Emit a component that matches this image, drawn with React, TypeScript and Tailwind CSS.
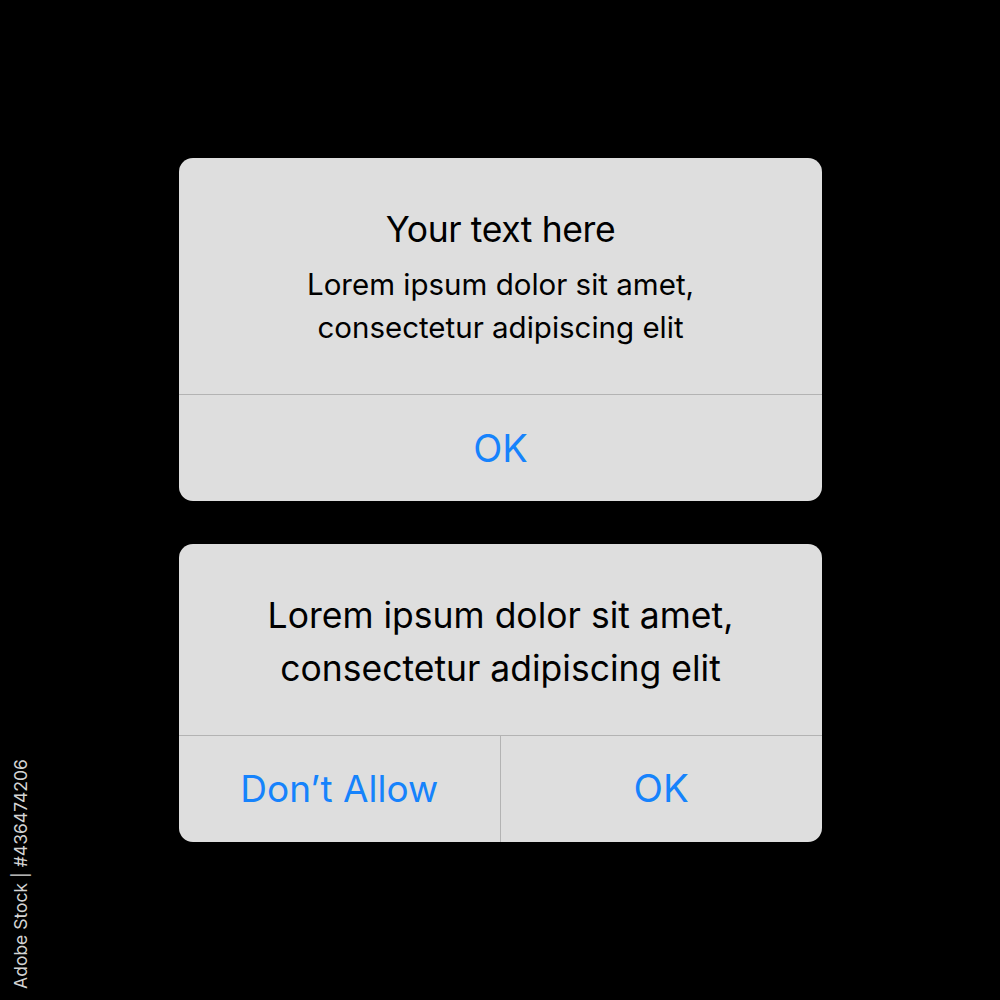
import React from "react";

const font = { fontFamily: "Inter, 'Noto Sans', sans-serif" };

function AlertOne() {
  return (
    <div className="w-[643px] rounded-[14px] bg-[#dedede] overflow-hidden">
      <div className="h-[236px] pt-[6px] flex flex-col items-center justify-center text-center text-black">
        <div className="text-[35.5px] leading-[42px] tracking-[-0.4px]">Your text here</div>
        <div className="mt-[12px] text-[29.5px] leading-[43px]">
          Lorem ipsum dolor sit amet,
          <br />
          consectetur adipiscing elit
        </div>
      </div>
      <div className="h-px bg-[#b3b3b3]" />
      <div className="h-[106px] flex items-center justify-center text-[38px] text-[#1683fc]">OK</div>
    </div>
  );
}

function AlertTwo() {
  return (
    <div className="w-[643px] rounded-[14px] bg-[#dedede] overflow-hidden">
      <div className="h-[191px] pt-[4px] flex items-center justify-center text-center text-black text-[35.5px] leading-[53px]">
        <div>
          Lorem ipsum dolor sit amet,
          <br />
          consectetur adipiscing elit
        </div>
      </div>
      <div className="h-px bg-[#b3b3b3]" />
      <div className="h-[106px] grid grid-cols-2 text-[37px] text-[#1683fc]">
        <div className="flex items-center justify-center border-r border-[#b3b3b3]">Don’t Allow</div>
        <div className="flex items-center justify-center text-[38.5px]">OK</div>
      </div>
    </div>
  );
}

export default function App() {
  return (
    <div className="relative w-[1000px] h-[1000px] bg-black" style={font}>
      <div className="flex flex-col items-center gap-[43px] pt-[158px] pl-[1px]">
        <AlertOne />
        <AlertTwo />
      </div>
      <div
        className="absolute left-[21px] top-[874px] text-[17.5px] text-[#d4d4d4] whitespace-nowrap"
        style={{ transform: "translate(-50%, -50%) rotate(-90deg)" }}
      >
        Adobe Stock | #436474206
      </div>
    </div>
  );
}
